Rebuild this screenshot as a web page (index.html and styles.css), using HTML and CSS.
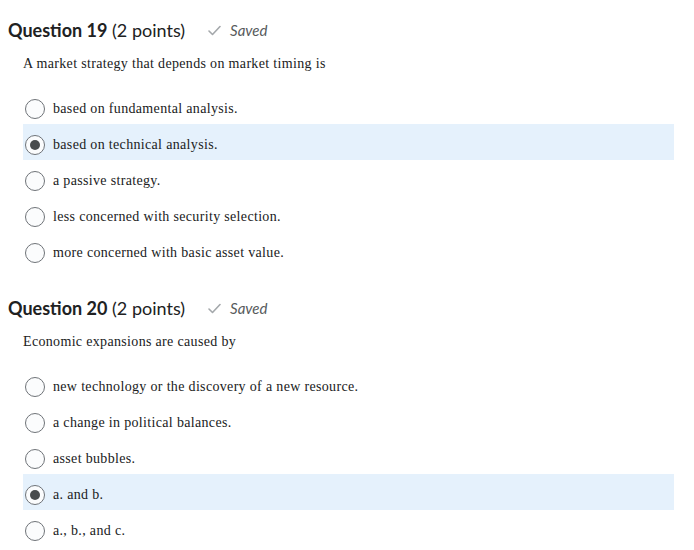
FILE: index.html
```html
<!DOCTYPE html>
<html>
<head>
<meta charset="utf-8">
<link rel="stylesheet" href="styles.css">
</head>
<body>
<div class="page">
  <section class="question">
    <div class="q-head">
      <h2 class="q-title"><strong>Question 19</strong> (2 points)</h2>
      <span class="saved"><svg class="check" width="13" height="11" viewBox="0 0 13 11"><path d="M1 6 L4.5 9.5 L12 1.5" fill="none" stroke="#a4a8ab" stroke-width="1.6" stroke-linecap="round" stroke-linejoin="round"/></svg><em>Saved</em></span>
    </div>
    <p class="q-text">A market strategy that depends on market timing is</p>
    <ul class="options">
      <li class="opt"><span class="radio"></span><span>based on fundamental analysis.</span></li>
      <li class="opt selected"><span class="radio"></span><span>based on technical analysis.</span></li>
      <li class="opt"><span class="radio"></span><span>a passive strategy.</span></li>
      <li class="opt"><span class="radio"></span><span>less concerned with security selection.</span></li>
      <li class="opt"><span class="radio"></span><span>more concerned with basic asset value.</span></li>
    </ul>
  </section>
  <section class="question">
    <div class="q-head">
      <h2 class="q-title"><strong>Question 20</strong> (2 points)</h2>
      <span class="saved"><svg class="check" width="13" height="11" viewBox="0 0 13 11"><path d="M1 6 L4.5 9.5 L12 1.5" fill="none" stroke="#a4a8ab" stroke-width="1.6" stroke-linecap="round" stroke-linejoin="round"/></svg><em>Saved</em></span>
    </div>
    <p class="q-text">Economic expansions are caused by</p>
    <ul class="options">
      <li class="opt"><span class="radio"></span><span>new technology or the discovery of a new resource.</span></li>
      <li class="opt"><span class="radio"></span><span>a change in political balances.</span></li>
      <li class="opt"><span class="radio"></span><span>asset bubbles.</span></li>
      <li class="opt selected"><span class="radio"></span><span>a. and b.</span></li>
      <li class="opt"><span class="radio"></span><span>a., b., and c.</span></li>
    </ul>
  </section>
</div>
</body>
</html>
```

FILE: styles.css
```css
* { box-sizing: border-box; }
html, body { margin: 0; padding: 0; background: #fff; }
.page {
  padding: 19px 20px 0 8px;
  display: flex;
  flex-direction: column;
  gap: 29px;
}
.question { display: flex; flex-direction: column; }
.q-head {
  display: flex;
  align-items: center;
  gap: 23px;
  height: 22px;
}
.q-title {
  margin: 0;
  font-family: Lato, "Liberation Sans", sans-serif;
  font-size: 18px;
  font-weight: 400;
  line-height: 22px;
  color: #202122;
}
.q-title strong { font-weight: 700; }
.saved {
  display: flex;
  align-items: center;
  gap: 9px;
  font-family: Lato, "Liberation Sans", sans-serif;
  font-size: 15px;
  color: #565a5c;
}
.saved em { font-style: italic; }
.q-text {
  margin: 14px 0 15px 15px;
  font-family: "Times New Roman", "Liberation Serif", "DejaVu Serif", serif;
  font-size: 14px;
  letter-spacing: 0.33px;
  line-height: 18px;
  color: #202122;
}
.options {
  list-style: none;
  margin: 0 0 0 15px;
  padding: 0;
}
.opt {
  display: flex;
  align-items: center;
  gap: 8px;
  height: 36px;
  padding: 6px 0 0 2px;
  font-family: "Times New Roman", "Liberation Serif", "DejaVu Serif", serif;
  font-size: 14px;
  letter-spacing: 0.33px;
  color: #202122;
}
.opt.selected { background: #e5f1fc; }
.radio {
  width: 20px;
  height: 20px;
  border-radius: 50%;
  border: 1px solid #6f7378;
  background: #fbfcfd;
  display: flex;
  align-items: center;
  justify-content: center;
  flex: none;
}
.selected .radio::after {
  content: "";
  width: 10px;
  height: 10px;
  border-radius: 50%;
  background: #494c4e;
}
```
